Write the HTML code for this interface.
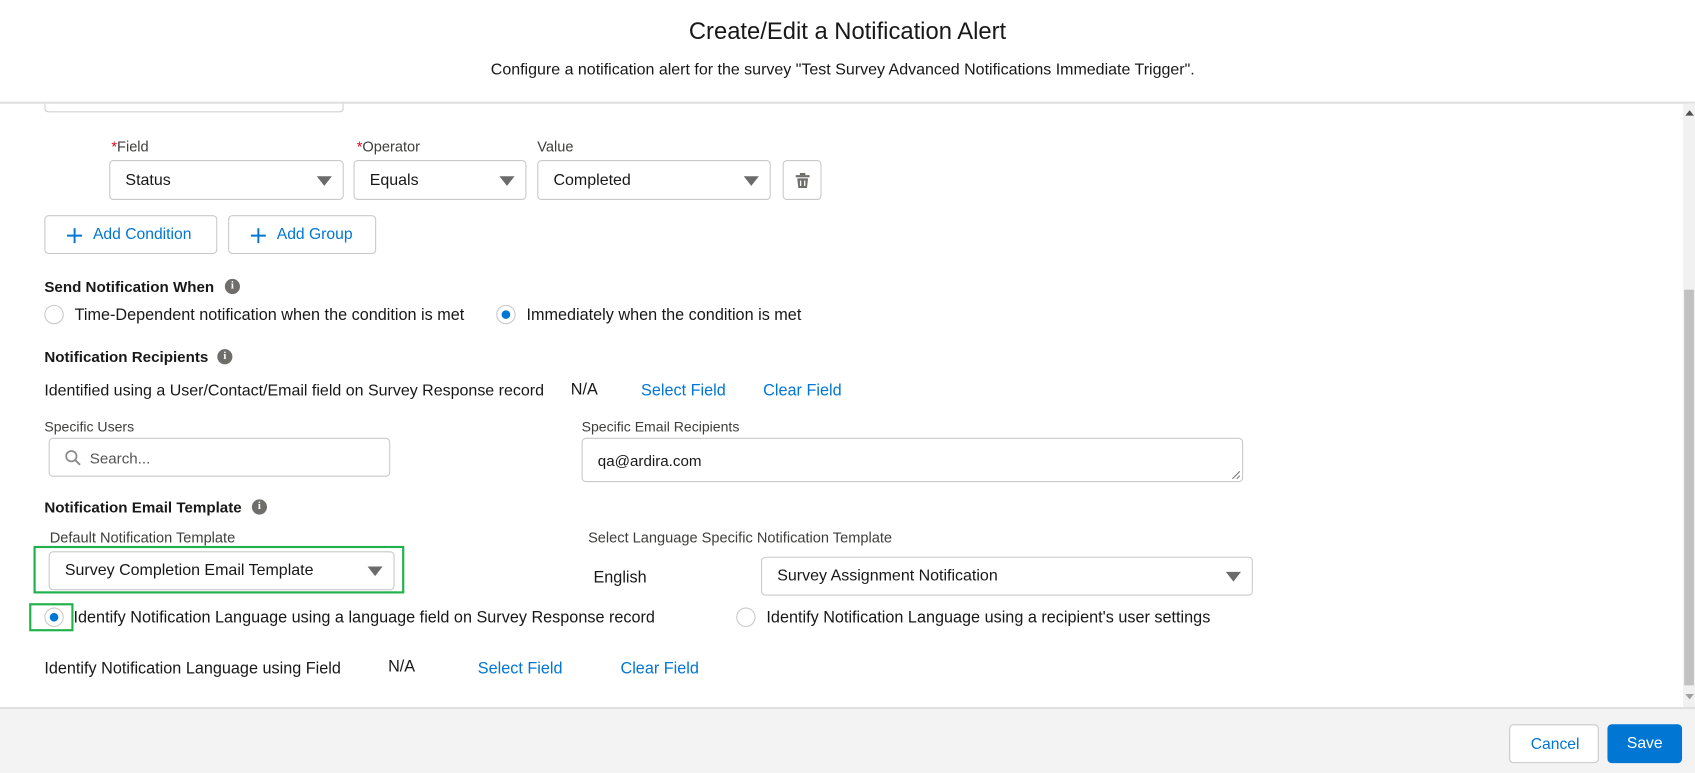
<!DOCTYPE html>
<html><head><meta charset="utf-8"><style>
*{box-sizing:border-box;margin:0;padding:0}
body{width:1695px;height:773px;overflow:hidden;background:#fff;font-family:"Liberation Sans",sans-serif;color:#181818}
#w{position:absolute;left:0;top:0;width:1568px;height:715px;transform:scale(1.081);transform-origin:0 0;font-size:15px}
.a{position:absolute;white-space:nowrap}
.box{position:absolute;border:1px solid #c9c9c9;border-radius:4px;background:#fff}
.sel .t{position:absolute;left:14px;top:50%;transform:translateY(-50%);font-size:14.8px}
.sel .c{position:absolute;right:10px;top:50%;margin-top:-4px;width:0;height:0;border-left:7px solid transparent;border-right:7px solid transparent;border-top:9px solid #6b6b6b}
.lbl{color:#3e3e3c;font-size:13px}
.req{color:#ea001e}
.b{font-weight:bold;font-size:14px}
.info{position:absolute;width:14px;height:14px;border-radius:50%;background:#706e6b;color:#fff;font-size:10px;font-weight:bold;text-align:center;line-height:14px;font-family:"Liberation Serif",serif}
.rad{position:absolute;width:18px;height:18px;border:1px solid #c9c9c9;border-radius:50%;background:#fff}
.rad.on::after{content:"";position:absolute;left:4px;top:4px;width:8px;height:8px;border-radius:50%;background:#0176d3}
.lnk{color:#0176d3}
.btn{position:absolute;border:1px solid #c9c9c9;border-radius:4px;background:#fff;color:#0176d3;font-size:14.5px}
.g{position:absolute;border:2px solid #1fb24a}
</style></head><body><div id="w">
<div class="a" style="left:0;width:1568px;text-align:center;top:16px;font-size:22px;color:#181818">Create/Edit a Notification Alert</div>
<div class="a" style="left:454px;top:57px;font-size:14.8px">Configure a notification alert for the survey "Test Survey Advanced Notifications Immediate Trigger".</div>

<div class="box" style="left:41px;top:80px;width:277px;height:24px;border-top:none;border-radius:0 0 4px 4px"></div>
<div style="position:absolute;left:0;top:0;width:1568px;height:94px;background:#fff"></div>
<div class="a" style="left:0;width:1568px;text-align:center;top:16px;font-size:22px;color:#181818">Create/Edit a Notification Alert</div>
<div class="a" style="left:454px;top:57px;font-size:14.8px">Configure a notification alert for the survey "Test Survey Advanced Notifications Immediate Trigger".</div>
<div style="position:absolute;left:0;top:94px;width:1568px;height:2px;background:#e0e0e0"></div>
<div style="position:absolute;left:1557px;top:96px;width:11px;height:559px;background:#f1f1f1"></div>
<div style="position:absolute;left:1558px;top:268px;width:9px;height:366px;background:#c1c1c1"></div>
<div style="position:absolute;left:1559px;top:102px;width:0;height:0;border-left:4px solid transparent;border-right:4px solid transparent;border-bottom:5px solid #505050"></div>
<div style="position:absolute;left:1559px;top:642px;width:0;height:0;border-left:4px solid transparent;border-right:4px solid transparent;border-top:5px solid #a0a0a0"></div>

<div class="a lbl" style="left:103px;top:128px;font-size:13.5px"><span class="req">*</span>Field</div>
<div class="a lbl" style="left:330px;top:128px;font-size:13.5px"><span class="req">*</span>Operator</div>
<div class="a lbl" style="left:497px;top:128px;font-size:13.5px">Value</div>
<div class="box sel" style="left:101px;top:148px;width:217px;height:37px"><span class="t">Status</span><span class="c"></span></div>
<div class="box sel" style="left:327px;top:148px;width:160px;height:37px"><span class="t">Equals</span><span class="c"></span></div>
<div class="box sel" style="left:497px;top:148px;width:216px;height:37px"><span class="t">Completed</span><span class="c"></span></div>
<div class="box" style="left:724px;top:148px;width:36px;height:37px"><svg style="position:absolute;left:11px;top:11px" width="13" height="14" viewBox="0 0 13 14"><rect x="0" y="2" width="13" height="2" fill="#706e6b"/><rect x="4" y="0" width="5" height="2" fill="#706e6b"/><path d="M1.5 5h10l-1 9h-8z" fill="#706e6b"/><rect x="4" y="7" width="1.2" height="5" fill="#fff"/><rect x="7.8" y="7" width="1.2" height="5" fill="#fff"/></svg></div>

<div class="btn" style="left:41px;top:199px;width:160px;height:36px"><svg style="position:absolute;left:20px;top:11px" width="14" height="14"><path d="M7 0v14M0 7h14" stroke="#0176d3" stroke-width="1.8"/></svg><span class="a" style="left:44px;top:9px">Add Condition</span></div>
<div class="btn" style="left:211px;top:199px;width:137px;height:36px"><svg style="position:absolute;left:20px;top:11px" width="14" height="14"><path d="M7 0v14M0 7h14" stroke="#0176d3" stroke-width="1.8"/></svg><span class="a" style="left:44px;top:9px">Add Group</span></div>

<div class="a b" style="left:41px;top:257px">Send Notification When</div><div class="info" style="left:208px;top:258px">i</div>
<div class="rad" style="left:41px;top:282px"></div><div class="a" style="left:69px;top:283px">Time-Dependent notification when the condition is met</div>
<div class="rad on" style="left:459px;top:282px"></div><div class="a" style="left:487px;top:283px">Immediately when the condition is met</div>

<div class="a b" style="left:41px;top:322px">Notification Recipients</div><div class="info" style="left:201px;top:323px">i</div>
<div class="a" style="left:41px;top:354px;font-size:14.8px">Identified using a User/Contact/Email field on Survey Response record</div>
<div class="a" style="left:528px;top:352px">N/A</div>
<div class="a lnk" style="left:593px;top:353px">Select Field</div>
<div class="a lnk" style="left:706px;top:353px">Clear Field</div>

<div class="a lbl" style="left:41px;top:387px">Specific Users</div>
<div class="a lbl" style="left:538px;top:387px">Specific Email Recipients</div>
<div class="box" style="left:45px;top:405px;width:316px;height:36px"><svg style="position:absolute;left:14px;top:10px" width="15" height="15" viewBox="0 0 15 15"><circle cx="6" cy="6" r="4.8" fill="none" stroke="#8a8a8a" stroke-width="1.6"/><path d="M9.5 9.5l4.5 4.5" stroke="#8a8a8a" stroke-width="1.8"/></svg><span class="a" style="left:37px;top:10px;color:#555;font-size:14px">Search...</span></div>
<div class="box" style="left:538px;top:405px;width:612px;height:41px"><span class="a" style="left:14px;top:12px;font-size:14px">qa@ardira.com</span><svg style="position:absolute;right:2px;bottom:2px" width="8" height="8"><path d="M1 8L8 1M5 8L8 5" stroke="#777" stroke-width="1"/></svg></div>

<div class="a b" style="left:41px;top:461px">Notification Email Template</div><div class="info" style="left:233px;top:462px">i</div>
<div class="a lbl" style="left:46px;top:490px;font-size:13.5px">Default Notification Template</div>
<div class="a lbl" style="left:544px;top:490px;font-size:13.5px">Select Language Specific Notification Template</div>
<div class="g" style="left:31px;top:505px;width:343px;height:44px"></div>
<div class="box sel" style="left:45px;top:510px;width:320px;height:36px"><span class="t">Survey Completion Email Template</span><span class="c"></span></div>
<div class="a" style="left:549px;top:526px">English</div>
<div class="box sel" style="left:704px;top:515px;width:455px;height:36px"><span class="t">Survey Assignment Notification</span><span class="c"></span></div>

<div class="g" style="left:27px;top:558px;width:41px;height:26px"></div>
<div class="rad on" style="left:41px;top:562px"></div><div class="a" style="left:68px;top:563px">Identify Notification Language using a language field on Survey Response record</div>
<div class="rad" style="left:681px;top:562px"></div><div class="a" style="left:709px;top:563px">Identify Notification Language using a recipient's user settings</div>

<div class="a" style="left:41px;top:610px">Identify Notification Language using Field</div>
<div class="a" style="left:359px;top:608px">N/A</div>
<div class="a lnk" style="left:442px;top:610px">Select Field</div>
<div class="a lnk" style="left:574px;top:610px">Clear Field</div>

<div style="position:absolute;left:0;top:654px;width:1568px;height:61px;background:#f3f3f3;border-top:2px solid #e0e0e0"></div>
<div class="btn" style="left:1396px;top:670px;width:83px;height:36px"><span class="a" style="left:19px;top:10px">Cancel</span></div>
<div style="position:absolute;left:1487px;top:670px;width:69px;height:36px;background:#0176d3;border-radius:4px;color:#fff;font-size:14.5px;text-align:center;line-height:36px">Save</div>
</div></body></html>
